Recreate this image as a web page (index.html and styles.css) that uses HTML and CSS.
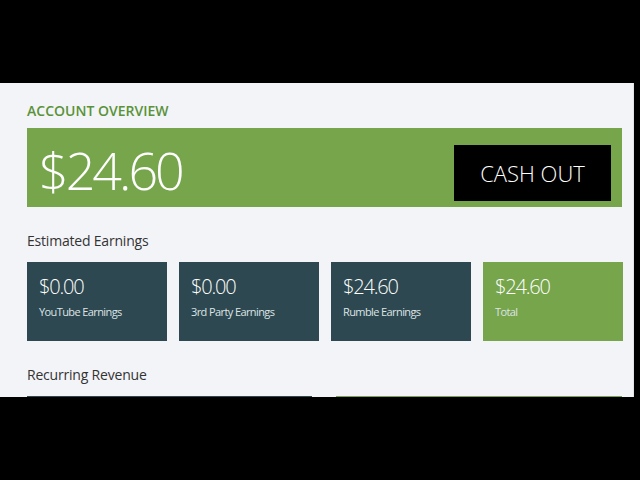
FILE: index.html
```html
<!DOCTYPE html>
<html>
<head>
<meta charset="utf-8">
<link rel="stylesheet" href="styles.css">
</head>
<body>
<div class="frame">
  <div class="bar"></div>
  <main class="page">
    <h1 class="title">ACCOUNT OVERVIEW</h1>
    <section class="banner">
      <div class="balance">$24.60</div>
      <button class="cashout">CASH OUT</button>
    </section>
    <h2 class="section">Estimated Earnings</h2>
    <div class="cards">
      <div class="card dark"><div class="value">$0.00</div><div class="label">YouTube Earnings</div></div>
      <div class="card dark"><div class="value">$0.00</div><div class="label">3rd Party Earnings</div></div>
      <div class="card dark"><div class="value">$24.60</div><div class="label">Rumble Earnings</div></div>
      <div class="card green"><div class="value">$24.60</div><div class="label">Total</div></div>
    </div>
    <h2 class="section recurring">Recurring Revenue</h2>
    <div class="strips">
      <div class="strip dark"></div>
      <div class="strip green"></div>
    </div>
  </main>
  <div class="bar"></div>
</div>
</body>
</html>
```
FILE: styles.css
```css
* { box-sizing: border-box; }
html, body { margin: 0; padding: 0; background: #000; }
body { font-family: "Open Sans", "Noto Sans", sans-serif; }
.frame { width: 640px; height: 480px; display: flex; flex-direction: column; }
.bar { height: 83px; background: #000; flex: none; }
.bar:last-child { flex: 1; height: auto; }
.page {
  height: 314px;
  flex: none;
  background: #f3f4f8;
  overflow: hidden;
  padding: 18px 11px 0 27px;
  border-right: 1px solid #e2e4ea;
  margin-right: 6px;
}
.title {
  margin: 0;
  font-size: 14px;
  font-weight: 600;
  color: #5a9238;
  line-height: 20px;
  height: 27px;
  letter-spacing: 0;
}
.banner {
  height: 79px;
  background: #76a54b;
  display: flex;
  align-items: center;
  justify-content: space-between;
  padding: 0 11px 0 12px;
}
.balance {
  color: #fff;
  font-weight: 300;
  font-size: 52px;
  letter-spacing: -3px;
  line-height: 1;
  padding-top: 4px;
}
.cashout {
  background: #000;
  color: #fff;
  border: none;
  width: 157px;
  height: 56px;
  font-family: inherit;
  font-weight: 300;
  font-size: 22px;
  margin-top: 10px;
  padding: 0;
}
.section {
  margin: 0;
  font-size: 14px;
  font-weight: 400;
  color: #333;
  line-height: 20px;
  padding-top: 24px;
  height: 55px;
  letter-spacing: -0.2px;
}
.cards { display: grid; grid-template-columns: repeat(4, 140px); gap: 12px; }
.card { height: 79px; padding: 13px 12px; color: #fff; }
.dark { background: #2d4850; }
.green { background: #76a54b; }
.value { font-size: 20px; font-weight: 300; line-height: 24px; letter-spacing: -1.2px; }
.label { font-size: 11px; line-height: 14px; margin-top: 6px; color: #dde4e6; letter-spacing: -0.6px; }
.recurring { padding-top: 24px; height: 55px; }
.strips { display: flex; gap: 24px; }
.strip { height: 10px; }
.strip.dark { width: 285px; }
.strip.green { width: 286px; }
```
